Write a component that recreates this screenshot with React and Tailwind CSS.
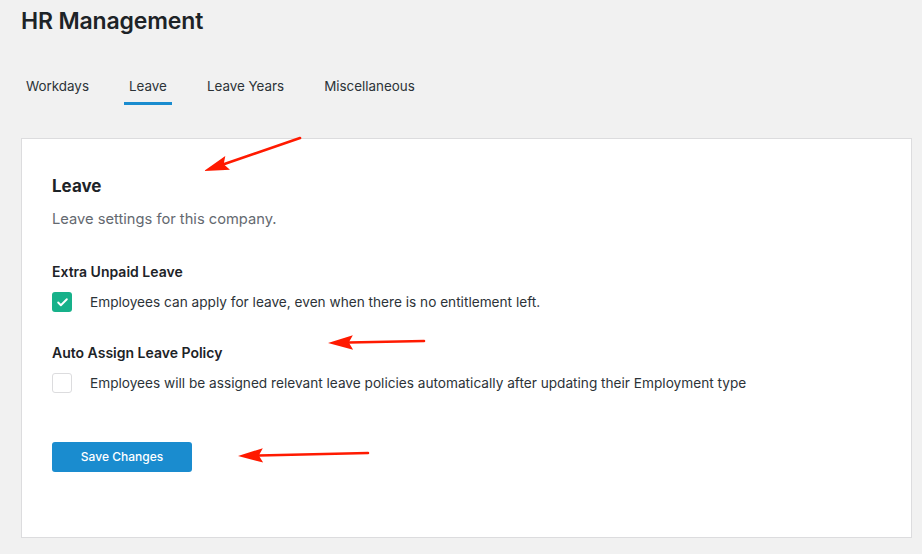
import { Check } from 'lucide-react';

function Arrow({ className, x1, y1, x2, y2, w, h }) {
  // red annotation arrow, head at (x2, y2)
  const ang = Math.atan2(y2 - y1, x2 - x1);
  const len = 26;
  const spread = 0.28;
  const ax = x2 - len * Math.cos(ang - spread);
  const ay = y2 - len * Math.sin(ang - spread);
  const bx = x2 - len * Math.cos(ang + spread);
  const by = y2 - len * Math.sin(ang + spread);
  const mx = x2 - len * 0.8 * Math.cos(ang);
  const my = y2 - len * 0.8 * Math.sin(ang);
  return (
    <svg className={className} width={w} height={h} viewBox={`0 0 ${w} ${h}`}>
      <line x1={x1} y1={y1} x2={mx} y2={my} stroke="#ff1a00" strokeWidth="2.6" strokeLinecap="round" />
      <polygon points={`${x2},${y2} ${ax},${ay} ${mx},${my} ${bx},${by}`} fill="#ff1a00" />
    </svg>
  );
}

const tabs = ['Workdays', 'Leave', 'Leave Years', 'Miscellaneous'];

export default function App() {
  return (
    <div className="relative w-[922px] h-[554px] overflow-hidden bg-[#f1f1f1] text-[#1d2327]" style={{ fontFamily: 'Inter, "Noto Sans", sans-serif' }}>
      <div className="pl-[21px] pt-[6px]">
        <h1 className="text-[23px] font-semibold leading-[30px] tracking-[-0.15px]">HR Management</h1>

        <div className="flex gap-[30px] mt-[40px] text-[13.4px] text-[#2c3338]">
          {tabs.map((t) => (
            <div
              key={t}
              className={
                'px-[5px] pb-[6px] leading-[20px] border-b-[3px] ' +
                (t === 'Leave' ? 'border-[#1a8ccf]' : 'border-transparent')
              }
            >
              {t}
            </div>
          ))}
        </div>

        <div className="mt-[33px] w-[891px] h-[400px] bg-white border border-[#dcdcde] px-[30px] pt-[35px]">
          <h2 className="text-[17px] font-bold leading-[24px]">Leave</h2>
          <p className="mt-[11px] text-[14.7px] leading-[20px] text-[#646970]">Leave settings for this company.</p>

          <div className="mt-[33px] text-[14px] font-semibold leading-[20px]">Extra Unpaid Leave</div>
          <div className="mt-[10px] flex items-center gap-[18px]">
            <div className="w-[20px] h-[20px] rounded-[3px] bg-[#17b18a] flex items-center justify-center">
              <Check size={13} strokeWidth={3.5} className="text-white" />
            </div>
            <span className="text-[13.65px] leading-[20px] text-[#2c3338]">
              Employees can apply for leave, even when there is no entitlement left.
            </span>
          </div>

          <div className="mt-[31px] text-[14px] font-semibold leading-[20px]">Auto Assign Leave Policy</div>
          <div className="mt-[10px] flex items-center gap-[18px]">
            <div className="w-[20px] h-[20px] rounded-[3px] bg-white border border-[#dcdcde]" />
            <span className="text-[13.65px] leading-[20px] text-[#2c3338]">
              Employees will be assigned relevant leave policies automatically after updating their Employment type
            </span>
          </div>

          <button className="mt-[49px] w-[140px] h-[30px] rounded-[3px] bg-[#1a8ccf] text-white text-[12px] font-medium">
            Save Changes
          </button>
        </div>
      </div>

      <Arrow className="absolute left-0 top-0 pointer-events-none" w={922} h={554} x1={300} y1={138} x2={204} y2={171} />
      <Arrow className="absolute left-0 top-0 pointer-events-none" w={922} h={554} x1={424} y1={341} x2={328} y2={343} />
      <Arrow className="absolute left-0 top-0 pointer-events-none" w={922} h={554} x1={368} y1={453} x2={238} y2={456} />
    </div>
  );
}
